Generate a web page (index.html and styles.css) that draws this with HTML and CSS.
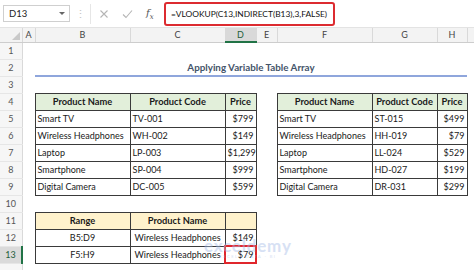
FILE: index.html
```html
<!DOCTYPE html>
<html>
<head>
<meta charset="utf-8">
<link rel="stylesheet" href="styles.css">
</head>
<body>
<div class="app">
  <div class="fbar">
    <div class="namebox"><span>D13</span><span class="caret"></span></div>
    <div class="sep">⋮</div>
    <div class="fxarea">
      <svg class="ico" width="10" height="10" viewBox="0 0 10 10"><path d="M1.5 1.5 L8.5 8.5 M8.5 1.5 L1.5 8.5" stroke="#b5b5b5" stroke-width="1.1" fill="none"/></svg>
      <svg class="ico" width="11" height="10" viewBox="0 0 11 10"><path d="M1 5.5 L4 8.5 L10 1.5" stroke="#b5b5b5" stroke-width="1.1" fill="none"/></svg>
      <span class="fx">f<sub>x</sub></span>
    </div>
    <div class="formula">=VLOOKUP(C13,INDIRECT(B13),3,FALSE)</div>
  </div>
  <div class="sheetwrap">
    <table class="sheet">
      <colgroup>
        <col class="w-rh"><col class="w-a"><col class="w-b"><col class="w-c"><col class="w-d"><col class="w-e"><col class="w-f"><col class="w-g"><col class="w-h"><col class="w-i">
      </colgroup>
      <tr class="hdr">
        <th class="corner"><span class="tri"></span></th><th>A</th><th>B</th><th>C</th><th class="sel">D</th><th>E</th><th>F</th><th>G</th><th>H</th><th class="last"></th>
      </tr>
      <tr><th class="rh">1</th><td></td><td></td><td></td><td></td><td></td><td></td><td></td><td></td><td></td></tr>
      <tr><th class="rh">2</th><td></td><td class="title" colspan="7">Applying Variable Table Array</td><td></td></tr>
      <tr><th class="rh">3</th><td></td><td></td><td></td><td></td><td></td><td></td><td></td><td></td><td></td></tr>
      <tr><th class="rh">4</th><td></td><td class="b hg">Product Name</td><td class="b hg">Product Code</td><td class="b hg">Price</td><td></td><td class="b hg">Product Name</td><td class="b hg">Product Code</td><td class="b hg">Price</td><td></td></tr>
      <tr><th class="rh">5</th><td></td><td class="b">Smart TV</td><td class="b">TV-001</td><td class="b num">$799</td><td></td><td class="b">Smart TV</td><td class="b">ST-015</td><td class="b num">$499</td><td></td></tr>
      <tr><th class="rh">6</th><td></td><td class="b">Wireless Headphones</td><td class="b">WH-002</td><td class="b num">$149</td><td></td><td class="b">Wireless Headphones</td><td class="b">HH-019</td><td class="b num">$79</td><td></td></tr>
      <tr><th class="rh">7</th><td></td><td class="b">Laptop</td><td class="b">LP-003</td><td class="b num">$1,299</td><td></td><td class="b">Laptop</td><td class="b">LL-024</td><td class="b num">$529</td><td></td></tr>
      <tr><th class="rh">8</th><td></td><td class="b">Smartphone</td><td class="b">SP-004</td><td class="b num">$999</td><td></td><td class="b">Smartphone</td><td class="b">HD-027</td><td class="b num">$199</td><td></td></tr>
      <tr><th class="rh">9</th><td></td><td class="b">Digital Camera</td><td class="b">DC-005</td><td class="b num">$599</td><td></td><td class="b">Digital Camera</td><td class="b">DR-031</td><td class="b num">$299</td><td></td></tr>
      <tr><th class="rh">10</th><td></td><td></td><td></td><td></td><td></td><td></td><td></td><td></td><td></td></tr>
      <tr><th class="rh">11</th><td></td><td class="b ho">Range</td><td class="b ho">Product Name</td><td class="b ho"></td><td></td><td></td><td></td><td></td><td></td></tr>
      <tr><th class="rh">12</th><td></td><td class="b ctr">B5:D9</td><td class="b ctr">Wireless Headphones</td><td class="b num">$149</td><td></td><td></td><td></td><td></td><td></td></tr>
      <tr><th class="rh selr">13</th><td></td><td class="b ctr">F5:H9</td><td class="b ctr">Wireless Headphones</td><td class="b num active">$79</td><td></td><td></td><td></td><td></td><td></td></tr>
      <tr><th class="rh"></th><td></td><td></td><td></td><td></td><td></td><td></td><td></td><td></td><td></td></tr>
    </table>
    <div class="watermark"><div class="wm-name">exceldemy</div><div class="wm-tag">EXCEL · DATA · BI</div></div>
  </div>
</div>
</body>
</html>
```

FILE: styles.css
```css
html, body {
  margin: 0;
  padding: 0;
  background: #ffffff;
}
body {
  width: 474px;
  height: 270px;
  overflow: hidden;
  font-family: Lato, "Liberation Sans", sans-serif;
  color: #1a1a1a;
}
.app {
  width: 474px;
}
.fbar {
  height: 28px;
  display: flex;
  align-items: center;
  background: #ffffff;
  box-sizing: border-box;
  border-bottom: 1px solid #e3e3e3;
  padding-left: 3px;
}
.namebox {
  width: 67px;
  height: 17px;
  box-sizing: border-box;
  border: 1px solid #cfcfcf;
  display: flex;
  align-items: center;
  justify-content: space-between;
  padding: 0 4px 0 5px;
  font-size: 9.5px;
  color: #222;
}
.caret {
  width: 0;
  height: 0;
  border-left: 3px solid transparent;
  border-right: 3px solid transparent;
  border-top: 3px solid #666;
}
.sep {
  width: 20px;
  text-align: center;
  color: #c4c4c4;
  font-size: 11px;
}
.fxarea {
  width: 74px;
  height: 20px;
  box-sizing: border-box;
  border-left: 1px solid #e6e6e6;
  display: flex;
  align-items: center;
  padding-left: 8px;
  gap: 13px;
}
.fx {
  font-family: "DejaVu Serif", serif;
  font-style: italic;
  font-size: 10px;
  color: #555;
}
.fx sub {
  font-size: 7px;
}
.formula {
  width: 171px;
  height: 24px;
  box-sizing: border-box;
  border: 2px solid #dc2b30;
  border-radius: 3px;
  display: flex;
  align-items: center;
  padding-left: 5px;
  font-size: 8.4px;
  color: #111;
  white-space: nowrap;
  overflow: hidden;
}
.sheetwrap {
  position: relative;
}
.sheet {
  table-layout: fixed;
  border-collapse: collapse;
  width: 474px;
  font-size: 9px;
}
.w-rh { width: 22px; }
.w-a { width: 13px; }
.w-b { width: 95px; }
.w-c { width: 95px; }
.w-d { width: 31px; }
.w-e { width: 21px; }
.w-f { width: 95px; }
.w-g { width: 65px; }
.w-h { width: 30px; }
.w-i { width: 7px; }
.sheet tr {
  height: 17px;
}
.sheet td {
  padding: 0 2px;
  white-space: nowrap;
  overflow: hidden;
  line-height: 15px;
}
.sheet tr.hdr {
  height: 14px;
}
.hdr th {
  background: #f3f3f3;
  border-right: 1px solid #d9d9d9;
  border-bottom: 1px solid #cdcdcd;
  font-weight: normal;
  font-size: 9px;
  color: #444;
  padding: 0;
  line-height: 13px;
}
.hdr th.sel {
  background: #d9d9d9;
  border-bottom: 2px solid #217346;
  color: #1d5e3a;
}
.hdr th.last {
  border-right: none;
}
.tri {
  display: block;
  width: 0;
  height: 0;
  margin-left: auto;
  margin-right: 2px;
  margin-top: 3px;
  border-left: 8px solid transparent;
  border-bottom: 8px solid #c9c9c9;
}
.rh {
  background: #f6f6f6;
  border-right: 1px solid #d9d9d9;
  border-bottom: 1px solid #e6e6e6;
  font-weight: normal;
  font-size: 9px;
  color: #555;
  padding: 0;
}
.rh.selr {
  background: #dadada;
  border-right: 2px solid #217346;
  color: #1d5e3a;
}
.title {
  text-align: center;
  font-weight: bold;
  font-size: 9.8px;
  color: #44546a;
  border-bottom: 2px solid #8fa6dc;
}
.b {
  border: 1px solid #3a3a3a;
}
.hg {
  background: #e2efda;
  font-weight: bold;
  text-align: center;
  font-size: 9.3px;
}
.ho {
  background: #fff2cc;
  font-weight: bold;
  text-align: center;
  font-size: 9.3px;
}
.num {
  text-align: right;
}
.ctr {
  text-align: center;
}
.active {
  outline: 2px solid #e0262c;
  outline-offset: -1px;
}
.watermark {
  position: absolute;
  left: 204px;
  top: 209px;
  color: #a8bde8;
  opacity: 0.45;
  text-align: center;
}
.wm-name {
  font-size: 17px;
  font-weight: bold;
  line-height: 17px;
  letter-spacing: 0.8px;
}
.wm-tag {
  font-size: 4px;
  line-height: 5px;
  letter-spacing: 1.5px;
}
```
